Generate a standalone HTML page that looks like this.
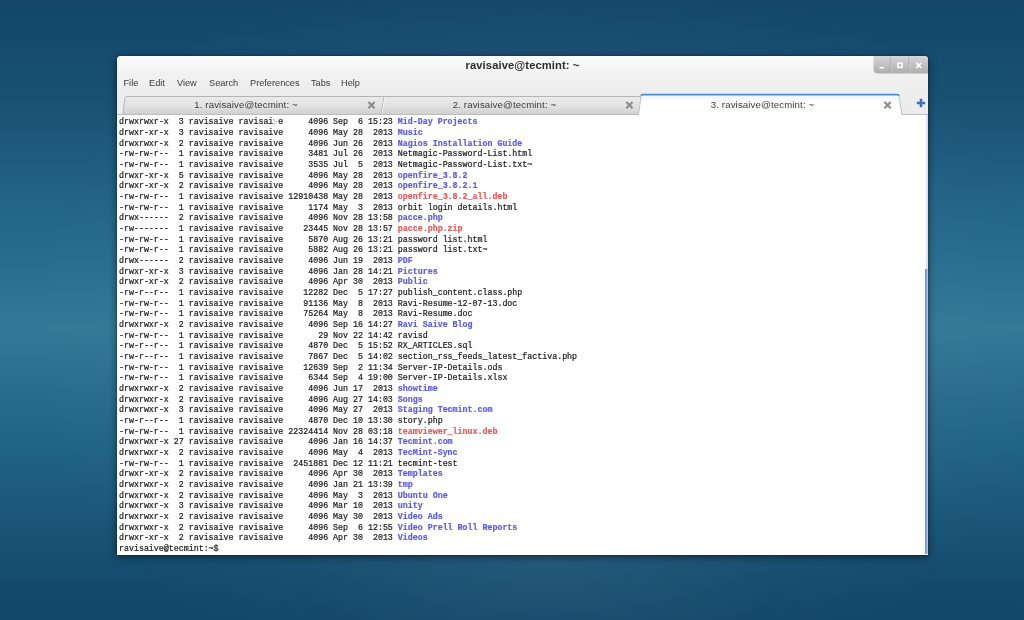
<!DOCTYPE html>
<html><head><meta charset="utf-8">
<style>
html,body{margin:0;padding:0;}
body{width:1024px;height:620px;overflow:hidden;position:relative;font-family:"Liberation Sans",sans-serif;
background:#14486b;}
#bg{position:absolute;left:0;top:0;width:1024px;height:620px;
background:radial-gradient(ellipse 250px 120px at 548px 556px,rgba(255,255,255,.04) 0%,rgba(255,255,255,.018) 50%,rgba(255,255,255,0) 100%),radial-gradient(ellipse 520px 400px at 540px 330px,rgba(255,255,255,.08) 0%,rgba(255,255,255,.035) 50%,rgba(255,255,255,0) 100%),linear-gradient(#13466a 0%,#185174 16%,#226386 32%,#2b6e90 44%,#347797 53%,#2b6d8f 62%,#216385 72.5%,#154c6f 92%,#13476a 100%);}
#win{position:absolute;left:117px;top:56px;width:811px;height:499px;background:#fff;border-radius:4px 4px 0 0;
box-shadow:0 2px 8px rgba(0,0,0,.5),0 0 1.5px rgba(0,0,0,.6);overflow:hidden;}
#title{position:absolute;left:0;top:0;width:100%;height:59px;background:linear-gradient(#fdfdfd 0,#f4f4f4 12px,#eeeeee 30px,#ececec 59px);}
#ttext{position:absolute;left:0;width:100%;top:3px;transform:translateY(0.45px);text-align:center;font-weight:bold;font-size:11.2px;color:#2e2e2e;letter-spacing:0.1px;filter:blur(0.3px);}
#menu{position:absolute;left:0;top:22.3px;height:14px;width:300px;filter:blur(0.3px);font-size:9.2px;color:#3a3a3a;}
#menu span{position:absolute;top:0;white-space:nowrap;}
#tabs{position:absolute;left:0;top:40px;width:100%;height:19px;filter:blur(0.3px);}
.tab{position:absolute;top:0;height:18px;font-size:9.6px;letter-spacing:0.15px;color:#3c3c3c;text-align:center;line-height:18px;white-space:nowrap;}
#term{position:absolute;left:0;top:59px;width:100%;height:440px;background:#fff;}
pre{margin:0;position:absolute;left:2px;top:2.2px;filter:blur(0.3px);font-family:"Liberation Mono",monospace;font-size:8.3px;line-height:10.672px;color:#1c1c1c;letter-spacing:0;-webkit-text-stroke:0.22px #1c1c1c;}
.d{color:#5c5ce4;font-weight:bold;-webkit-text-stroke:0.2px #5c5ce4;}
.r{color:#e45a5a;font-weight:bold;-webkit-text-stroke:0.2px #e45a5a;}
</style></head><body>
<div id="bg"></div>
<div id="win">
<div id="title"><div id="ttext">ravisaive@tecmint: ~</div></div>
<div id="menu"><span style="left:6.5px">File</span><span style="left:32px">Edit</span><span style="left:60px">View</span><span style="left:92px">Search</span><span style="left:133px">Preferences</span><span style="left:194px">Tabs</span><span style="left:224px">Help</span></div>
<svg id="chrome" width="811" height="60" viewBox="0 0 811 60" style="position:absolute;left:0;top:0">
<defs>
<linearGradient id="gt" x1="0" y1="0" x2="0" y2="1"><stop offset="0" stop-color="#ebebeb"/><stop offset="0.5" stop-color="#e2e2e2"/><stop offset="1" stop-color="#d0d0d0"/></linearGradient>
<linearGradient id="ga" x1="0" y1="0" x2="0" y2="1"><stop offset="0" stop-color="#edf3fb"/><stop offset="0.35" stop-color="#fdfdfe"/><stop offset="1" stop-color="#ffffff"/></linearGradient>
<linearGradient id="gc" x1="0" y1="0" x2="0" y2="1"><stop offset="0" stop-color="#d6d6d6"/><stop offset="1" stop-color="#adadad"/></linearGradient>
</defs>
<!-- window controls -->
<path d="M756.5 0 H811 V17.5 H761 Q756.5 17.5 756.5 13 Z" fill="url(#gc)"/>
<path d="M774.3 1 V17 M792.7 1 V17" stroke="#cecece" stroke-width="1" opacity=".9"/>
<path d="M773.3 1 V17 M791.7 1 V17" stroke="#a2a2a2" stroke-width="1" opacity=".6"/>
<path d="M762.5 11.8 h4.4" stroke="#fff" stroke-width="1.6"/>
<rect x="780.9" y="7.2" width="4.2" height="4.2" fill="none" stroke="#fff" stroke-width="1.5"/>
<path d="M799.2 6.9 l5.1 5.1 M804.3 6.9 l-5.1 5.1" stroke="#fff" stroke-width="1.6"/>
<!-- inactive tabs -->
<path d="M5.8 58.5 L8 42 Q8.3 40.5 10 40.5 H524 V58.5 Z" fill="url(#gt)"/>
<path d="M5.8 58.5 L8 42 Q8.3 40.5 10 40.5 H524" fill="none" stroke="#b4b4b4" stroke-width="1"/>
<path d="M264 58.5 L267 40.5" stroke="#b9b9b9" stroke-width="1"/>
<path d="M265 58.5 L268 40.5" stroke="#f4f4f4" stroke-width="1" opacity=".8"/>
<path d="M0 58.5 H523 M785 58.5 H811" stroke="#bdbdbd" stroke-width="1"/>
<!-- active tab -->
<path d="M521.5 59 L524 40 Q524.3 38.5 526 38.5 H780 Q781.7 38.5 782 40 L785 59 Z" fill="url(#ga)"/>
<path d="M521.5 59 L524 40 M782 40 L785 59" stroke="#b9c3d0" stroke-width="1" fill="none"/>
<path d="M523.8 39.6 Q524.2 38.6 526 38.6 H780 Q781.8 38.6 782.2 39.6" stroke="#4f8fd0" stroke-width="1.7" fill="none"/>
<!-- close icons -->
<g stroke="#8c8c8c" stroke-width="2.1" stroke-linecap="butt">
<path d="M251.4 46.1 l6.2 6.2 M257.6 46.1 l-6.2 6.2"/>
<path d="M509.3 46.1 l6.2 6.2 M515.5 46.1 l-6.2 6.2"/>
<path d="M767.5 46.1 l6.2 6.2 M773.7 46.1 l-6.2 6.2"/>
</g>
<!-- plus -->
<path d="M799.8 47 h8.4 M804 42.8 v8.4" stroke="#3f72b6" stroke-width="2.6"/>
</svg>
<div id="tabs">
<div class="tab" style="left:6px;width:246px">1. ravisaive@tecmint: ~</div>
<div class="tab" style="left:265px;width:245px">2. ravisaive@tecmint: ~</div>
<div class="tab" style="left:523px;width:245px">3. ravisaive@tecmint: ~</div>
</div>
<div id="term"><pre>drwxrwxr-x  3 ravisaive ravisaive     4096 Sep  6 15:23 <span class="d">Mid-Day Projects</span>
drwxr-xr-x  3 ravisaive ravisaive     4096 May 28  2013 <span class="d">Music</span>
drwxrwxr-x  2 ravisaive ravisaive     4096 Jun 26  2013 <span class="d">Nagios Installation Guide</span>
-rw-rw-r--  1 ravisaive ravisaive     3481 Jul 26  2013 Netmagic-Password-List.html
-rw-rw-r--  1 ravisaive ravisaive     3535 Jul  5  2013 Netmagic-Password-List.txt~
drwxr-xr-x  5 ravisaive ravisaive     4096 May 28  2013 <span class="d">openfire_3.8.2</span>
drwxr-xr-x  2 ravisaive ravisaive     4096 May 28  2013 <span class="d">openfire_3.8.2.1</span>
-rw-rw-r--  1 ravisaive ravisaive 12910438 May 28  2013 <span class="r">openfire_3.8.2_all.deb</span>
-rw-rw-r--  1 ravisaive ravisaive     1174 May  3  2013 orbit login details.html
drwx------  2 ravisaive ravisaive     4096 Nov 28 13:58 <span class="d">pacce.php</span>
-rw-------  1 ravisaive ravisaive    23445 Nov 28 13:57 <span class="r">pacce.php.zip</span>
-rw-rw-r--  1 ravisaive ravisaive     5870 Aug 26 13:21 password list.html
-rw-rw-r--  1 ravisaive ravisaive     5882 Aug 26 13:21 password list.txt~
drwx------  2 ravisaive ravisaive     4096 Jun 19  2013 <span class="d">PDF</span>
drwxr-xr-x  3 ravisaive ravisaive     4096 Jan 28 14:21 <span class="d">Pictures</span>
drwxr-xr-x  2 ravisaive ravisaive     4096 Apr 30  2013 <span class="d">Public</span>
-rw-r--r--  1 ravisaive ravisaive    12282 Dec  5 17:27 publish_content.class.php
-rw-rw-r--  1 ravisaive ravisaive    91136 May  8  2013 Ravi-Resume-12-07-13.doc
-rw-rw-r--  1 ravisaive ravisaive    75264 May  8  2013 Ravi-Resume.doc
drwxrwxr-x  2 ravisaive ravisaive     4096 Sep 16 14:27 <span class="d">Ravi Saive Blog</span>
-rw-rw-r--  1 ravisaive ravisaive       29 Nov 22 14:42 ravisd
-rw-r--r--  1 ravisaive ravisaive     4870 Dec  5 15:52 RX_ARTICLES.sql
-rw-r--r--  1 ravisaive ravisaive     7867 Dec  5 14:02 section_rss_feeds_latest_factiva.php
-rw-rw-r--  1 ravisaive ravisaive    12639 Sep  2 11:34 Server-IP-Details.ods
-rw-rw-r--  1 ravisaive ravisaive     6344 Sep  4 19:00 Server-IP-Details.xlsx
drwxrwxr-x  2 ravisaive ravisaive     4096 Jun 17  2013 <span class="d">showtime</span>
drwxrwxr-x  2 ravisaive ravisaive     4096 Aug 27 14:03 <span class="d">Songs</span>
drwxrwxr-x  3 ravisaive ravisaive     4096 May 27  2013 <span class="d">Staging Tecmint.com</span>
-rw-r--r--  1 ravisaive ravisaive     4870 Dec 10 13:30 story.php
-rw-rw-r--  1 ravisaive ravisaive 22324414 Nov 28 03:18 <span class="r">teamviewer_linux.deb</span>
drwxrwxr-x 27 ravisaive ravisaive     4096 Jan 16 14:37 <span class="d">Tecmint.com</span>
drwxrwxr-x  2 ravisaive ravisaive     4096 May  4  2013 <span class="d">TecMint-Sync</span>
-rw-rw-r--  1 ravisaive ravisaive  2451881 Dec 12 11:21 tecmint-test
drwxr-xr-x  2 ravisaive ravisaive     4096 Apr 30  2013 <span class="d">Templates</span>
drwxrwxr-x  2 ravisaive ravisaive     4096 Jan 21 13:39 <span class="d">tmp</span>
drwxrwxr-x  2 ravisaive ravisaive     4096 May  3  2013 <span class="d">Ubuntu One</span>
drwxrwxr-x  3 ravisaive ravisaive     4096 Mar 10  2013 <span class="d">unity</span>
drwxrwxr-x  2 ravisaive ravisaive     4096 May 30  2013 <span class="d">Video Ads</span>
drwxrwxr-x  2 ravisaive ravisaive     4096 Sep  6 12:55 <span class="d">Video Prell Roll Reports</span>
drwxr-xr-x  2 ravisaive ravisaive     4096 Apr 30  2013 <span class="d">Videos</span>
ravisaive@tecmint:~$</pre>
<div style="position:absolute;left:156.9px;top:2.5px;width:4.6px;height:8px;background:rgba(255,255,255,.93);filter:blur(0.3px)"><div style="position:absolute;left:1.9px;top:3.4px;width:1px;height:1.2px;background:#a8a8a8"></div><div style="position:absolute;left:0px;top:2px;width:0.8px;height:5px;background:#b0b0b0;opacity:.6"></div></div>
<div style="position:absolute;left:809.2px;top:0;width:1.8px;height:154px;background:#dfe2e9"></div>
<div style="position:absolute;left:807.5px;top:154px;width:3.5px;height:284.5px;background:linear-gradient(90deg,#6f93c2 0,#7a9bc7 45%,#a9bfd8 60%,#b8cadf 100%)"></div>
</div>
</div>
</body></html>
